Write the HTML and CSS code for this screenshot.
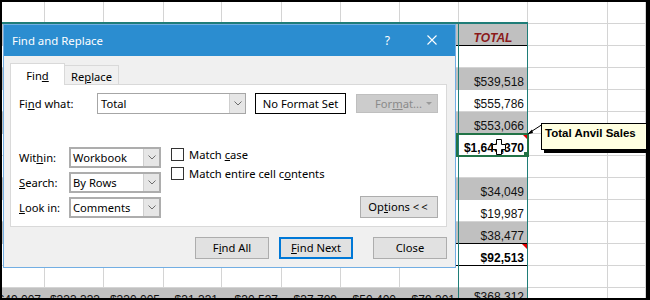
FILE: index.html
```html
<!DOCTYPE html>
<html>
<head>
<meta charset="utf-8">
<link rel="stylesheet" href="styles.css">
</head>
<body>
<div class="screen">
  <div class="sheet">
    <div class="row"><span></span><span></span><span></span><span></span><span></span><span></span><span></span><span></span><span></span><span></span><span></span></div>
    <div class="row band"><span></span><span></span><span></span><span></span><span></span><span></span><span></span><span class="bk"></span><span class="bk hd">TOTAL</span><span></span><span></span></div>
    <div class="row"><span></span><span></span><span></span><span></span><span></span><span></span><span></span><span></span><span></span><span></span><span></span></div>
    <div class="row band"><span></span><span></span><span></span><span></span><span></span><span></span><span></span><span></span><span>$539,518</span><span></span><span></span></div>
    <div class="row"><span></span><span></span><span></span><span></span><span></span><span></span><span></span><span></span><span>$555,786</span><span></span><span></span></div>
    <div class="row band"><span></span><span></span><span></span><span></span><span></span><span></span><span></span><span></span><span>$553,066</span><span></span><span></span></div>
    <div class="row"><span></span><span></span><span></span><span></span><span></span><span></span><span></span><span></span><span class="b cm">$1,648,370</span><span></span><span></span></div>
    <div class="row"><span></span><span></span><span></span><span></span><span></span><span></span><span></span><span></span><span></span><span></span><span></span></div>
    <div class="row band"><span></span><span></span><span></span><span></span><span></span><span></span><span></span><span></span><span>$34,049</span><span></span><span></span></div>
    <div class="row"><span></span><span></span><span></span><span></span><span></span><span></span><span></span><span></span><span>$19,987</span><span></span><span></span></div>
    <div class="row band"><span></span><span></span><span></span><span></span><span></span><span></span><span></span><span class="bk"></span><span class="bk">$38,477</span><span></span><span></span></div>
    <div class="row"><span></span><span></span><span></span><span></span><span></span><span></span><span></span><span class="bk"></span><span class="bk b cm">$92,513</span><span></span><span></span></div>
    <div class="row"><span></span><span></span><span></span><span></span><span></span><span></span><span></span><span></span><span></span><span></span><span></span></div>
    <div class="row band low"><span>$49,007</span><span>$333,333</span><span>$330,005</span><span>$31,331</span><span>$30,537</span><span>$37,709</span><span>$50,400</span><span>$79,301</span><span class="lowtot">$368,312</span><span></span><span></span></div>
  </div>

  <div class="range-top"></div>
  <div class="range-side range-l"></div>
  <div class="range-side range-r"></div>
  <div class="cellsel"></div>
  <div class="handle"></div>

  <div class="dialog">
    <div class="titlebar">
      <span class="title">Find and Replace</span>
      <span class="help">?</span>
      <svg class="x" width="10" height="10" viewBox="0 0 10 10"><path d="M0.5 0.5L9.5 9.5M9.5 0.5L0.5 9.5" stroke="#fff" stroke-width="1.1" fill="none"/></svg>
    </div>
    <div class="dbody">
      <div class="tabs">
        <div class="tab active">Fin<u>d</u></div>
        <div class="tab">Re<u>p</u>lace</div>
      </div>
      <div class="panel">
        <div class="findrow">
          <span class="lbl lbl-find">Fi<u>n</u>d what:</span>
          <div class="combo combo-find"><span class="val">Total</span><span class="drop"><svg width="8" height="5" viewBox="0 0 8 5"><path d="M0.5 0.5L4 4L7.5 0.5" fill="none" stroke="#6d6d6d"/></svg></span></div>
          <div class="nofmt">No Format Set</div>
          <div class="fmtbtn"><span>For<u>m</u>at...</span><span class="tri"></span></div>
        </div>
        <div class="lower">
          <div class="opts">
            <span class="lbl">Wit<u>h</u>in:</span>
            <div class="combo"><span class="val">Workbook</span><span class="drop"><svg width="8" height="5" viewBox="0 0 8 5"><path d="M0.5 0.5L4 4L7.5 0.5" fill="none" stroke="#6d6d6d"/></svg></span></div>
            <span class="lbl"><u>S</u>earch:</span>
            <div class="combo"><span class="val">By Rows</span><span class="drop"><svg width="8" height="5" viewBox="0 0 8 5"><path d="M0.5 0.5L4 4L7.5 0.5" fill="none" stroke="#6d6d6d"/></svg></span></div>
            <span class="lbl"><u>L</u>ook in:</span>
            <div class="combo"><span class="val">Comments</span><span class="drop"><svg width="8" height="5" viewBox="0 0 8 5"><path d="M0.5 0.5L4 4L7.5 0.5" fill="none" stroke="#6d6d6d"/></svg></span></div>
          </div>
          <div class="checks">
            <label class="chk"><span class="box"></span><span>Match <u>c</u>ase</span></label>
            <label class="chk"><span class="box"></span><span>Match entire cell c<u>o</u>ntents</span></label>
          </div>
          <div class="btn optbtn">Op<u>t</u>ions <span class="lt">&lt;&lt;</span></div>
        </div>
      </div>
      <div class="actions">
        <div class="btn">F<u>i</u>nd All</div>
        <div class="btn primary"><u>F</u>ind Next</div>
        <div class="btn close">Close</div>
      </div>
    </div>
  </div>

  <svg class="pointer" width="20" height="16" viewBox="0 0 20 16">
    <path d="M3 12L17 3" stroke="#000" stroke-width="1" fill="none"/>
    <path d="M1 13.5L6 8.5L7 12Z" fill="#000"/>
  </svg>
  <div class="callout">Total Anvil Sales</div>

  <svg class="cursor" width="14" height="16" viewBox="0 0 14 16">
    <path d="M4.5 0.5H9.5V5.5H13.5V10.5H9.5V15.5H4.5V10.5H0.5V5.5H4.5Z" fill="#fff" stroke="#000" stroke-width="1"/>
  </svg>
</div>
</body>
</html>
```

FILE: styles.css
```css
* { box-sizing: border-box; }
html, body { margin: 0; padding: 0; }
body { width: 650px; height: 300px; overflow: hidden; background: #fff; }

.screen {
  position: relative;
  width: 650px;
  height: 300px;
  overflow: hidden;
  border-style: solid;
  border-color: #000;
  border-width: 2px 4px 2px 2px;
  font-family: "Liberation Sans", Arial, sans-serif;
  font-size: 12px;
  color: #111;
}

.sheet { display: flex; flex-direction: column; }
.row {
  flex: none;
  display: grid;
  grid-template-columns: 43px 59px 60px 58px 60px 59px 59px 59px 69px 80px 38px;
  height: 22px;
}
.row > span {
  position: relative;
  display: flex;
  align-items: flex-end;
  justify-content: flex-end;
  padding: 0 3px 0 0;
  border-right: 1px solid #d4d4d4;
  border-bottom: 1px solid #d4d4d4;
  white-space: nowrap;
  overflow: hidden;
  line-height: 14px;
}
.band > span:nth-child(-n+9) { background: #c0c0c0; border-color: #c0c0c0; }
.row > span.bk { border-bottom-color: #000; }
.row > span.hd {
  justify-content: center;
  padding: 0;
  font-weight: bold;
  font-style: italic;
  color: #8b1a1a;
}
.b { font-weight: bold; color: #000; }
.cm::after {
  content: "";
  position: absolute;
  top: 0;
  right: 0;
  border-top: 5px solid #e00000;
  border-left: 5px solid transparent;
}
.row.low > span { align-items: flex-start; padding-top: 5px; }
.row.low > span.lowtot { padding-top: 2px; }

.range-top {
  position: absolute;
  left: -2px; top: 20px;
  width: 528px; height: 2px;
  background: #1f7d78;
}
.range-side {
  position: absolute;
  top: 20px; bottom: 0;
  width: 1px;
  background: #1f7d78;
}
.range-l { left: 456px; }
.range-r { left: 525px; }
.cellsel {
  position: absolute;
  left: 454px; top: 131px;
  width: 73px; height: 24px;
  border: 2px solid #217346;
}
.handle {
  position: absolute;
  left: 522px; top: 150px;
  width: 5px; height: 5px;
  background: #217346;
}

/* Dialog */
.dialog {
  position: absolute;
  left: 1px; top: 22px;
  width: 453px; height: 244px;
  border: 1px solid #72aee3;
  background: #f0f0f0;
  font-family: "Noto Sans", "Open Sans", sans-serif;
  font-size: 11.2px;
  color: #000;
  display: flex;
  flex-direction: column;
}
.titlebar {
  height: 31px;
  flex: none;
  background: #2b8dd0;
  color: #fff;
  display: flex;
  align-items: center;
  padding: 0 18px 1px 8px;
}
.title { flex: 1; font-size: 11.4px; }
.help { font-size: 12px; margin-right: 37px; }
.x { display: block; }

.dbody { padding: 7px 8px 0 6px; display: flex; flex-direction: column; }
.tabs { display: flex; align-items: flex-end; height: 21px; }
.tab {
  height: 19px;
  width: 54px;
  border: 1px solid #d9d9d9;
  border-left: none;
  border-bottom: none;
  background: #f0f0f0;
  text-align: center;
  line-height: 19px;
  padding-top: 1px;
}
.tab.active {
  position: relative;
  z-index: 1;
  width: 55px;
  height: 22px;
  margin-bottom: -1px;
  border-left: 1px solid #d9d9d9;
  background: #fff;
  line-height: 22px;
  padding-top: 1px;
}
.panel {
  height: 143px;
  border: 1px solid #d9d9d9;
  background: #fff;
  padding: 8px 0 0 8px;
}
.findrow { display: flex; align-items: center; height: 21px; }
.lbl-find { width: 78px; }
.combo {
  display: flex;
  height: 21px;
  border: 2px solid #adadad;
  background: #fff;
}
.combo-find { width: 149px; border-width: 1px; border-color: #a6a6a6; }
.val { flex: 1; padding-left: 2px; line-height: 17px; white-space: nowrap; }
.combo-find .val { padding-left: 3px; line-height: 19px; }
.drop {
  width: 16px;
  background: #e6e6e6;
  border-left: 1px solid #cfcfcf;
  display: flex;
  align-items: center;
  justify-content: center;
}
.nofmt {
  margin-left: 9px;
  width: 91px;
  height: 21px;
  border: 1px solid #000;
  background: #fff;
  text-align: center;
  line-height: 19px;
}
.fmtbtn {
  margin-left: 10px;
  width: 82px;
  height: 19px;
  border: 1px solid #bfbfbf;
  background: #cccccc;
  color: #8a8a8a;
  display: flex;
  align-items: center;
  padding: 0 3px 0 18px;
}
.fmtbtn span:first-child { flex: 1; }
.tri {
  width: 0; height: 0;
  border-left: 3px solid transparent;
  border-right: 3px solid transparent;
  border-top: 3px solid #9a9a9a;
  margin-right: 2px;
}

.lower { display: flex; margin-top: 33px; }
.opts {
  display: grid;
  grid-template-columns: 50px 92px;
  grid-auto-rows: 21px;
  row-gap: 4px;
  align-items: center;
}
.opts .combo { width: 92px; }
.checks {
  margin-left: 10px;
  margin-top: 1px;
  display: flex;
  flex-direction: column;
  gap: 6px;
}
.chk { display: flex; align-items: center; height: 13px; white-space: nowrap; }
.box {
  flex: none;
  width: 13px; height: 13px;
  border: 1px solid #333;
  background: #fff;
  margin-right: 5px;
}
.btn {
  width: 74px;
  height: 22px;
  border: 1px solid #adadad;
  background: #e1e1e1;
  text-align: center;
  line-height: 20px;
  white-space: nowrap;
}
.optbtn {
  align-self: flex-end;
  margin-left: auto;
  margin-right: 8px;
  width: 78px;
}
.lt { letter-spacing: 2px; }
.actions {
  display: flex;
  justify-content: flex-end;
  margin-top: 10px;
}
.actions .primary { margin-left: 10px; border: 2px solid #0078d7; line-height: 18px; }
.actions .close { margin-left: 20px; }

/* Callout */
.pointer { position: absolute; left: 524px; top: 119px; }
.callout {
  position: absolute;
  left: 539px; top: 121px;
  width: 110px; height: 27px;
  border: 1px solid #000;
  background: #ffffe1;
  box-shadow: 3px 3px 0 #000;
  font-family: "Liberation Sans", Arial, sans-serif;
  font-weight: bold;
  font-size: 11.5px;
  color: #000;
  padding: 2px 0 0 3px;
  line-height: 14px;
}
.cursor { position: absolute; left: 490px; top: 137px; }
```
